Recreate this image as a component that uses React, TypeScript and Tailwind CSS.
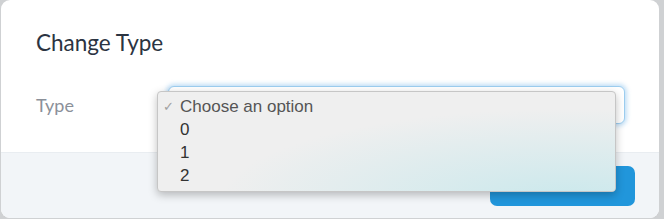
export default function App() {
  return (
    <div className="w-[664px] h-[219px] bg-[#cfd1d3] pl-[1px] pr-[5px] overflow-hidden">
      <div className="relative h-[218px] bg-white rounded-[9px] flex flex-col overflow-hidden">
        {/* body */}
        <div className="h-[152px] pl-[35px] pr-[34px] pt-[29px]">
          <h2 className="text-[22.5px] leading-[28px] text-[#2b3442] font-['Lato',sans-serif]">
            Change Type
          </h2>
          <div className="mt-[29px] flex items-center">
            <label className="w-[132px] text-[18px] text-[#8b9099] font-['Lato',sans-serif]">Type</label>
            <div className="w-[457px] h-[38px] rounded-[6px] bg-white border border-[#9ccdef] shadow-[0_0_4px_2px_rgba(120,185,235,0.45)]" />
          </div>
        </div>
        {/* footer */}
        <div className="flex-1 bg-[#f2f5f8] border-t border-[#e9edf1] flex justify-end pr-[24px] pt-[13px]">
          <button className="w-[145px] h-[40px] rounded-[7px] bg-[#2196db]" />
        </div>

        {/* native select popup */}
        <div className="absolute left-[156px] top-[91px] w-[459px] h-[101px] rounded-[4px] border border-[#c6c6c6] bg-[#efefef] shadow-[0_3px_8px_rgba(0,0,0,0.25)] overflow-hidden font-['Liberation_Sans',Arial,sans-serif] text-[17px] leading-[23px] py-[3px]">
          <div className="absolute inset-0 bg-[radial-gradient(ellipse_at_90%_110%,rgba(200,232,236,0.95),rgba(239,239,239,0)_60%)]" />
          <div className="relative flex">
            <span className="w-[22px] pl-[5px] text-[13px] text-[#a0a0a0]">✓</span>
            <span className="text-[#555]">Choose an option</span>
          </div>
          <div className="relative pl-[22px] text-[#333]">0</div>
          <div className="relative pl-[22px] text-[#333]">1</div>
          <div className="relative pl-[22px] text-[#333]">2</div>
        </div>
      </div>
    </div>
  );
}
